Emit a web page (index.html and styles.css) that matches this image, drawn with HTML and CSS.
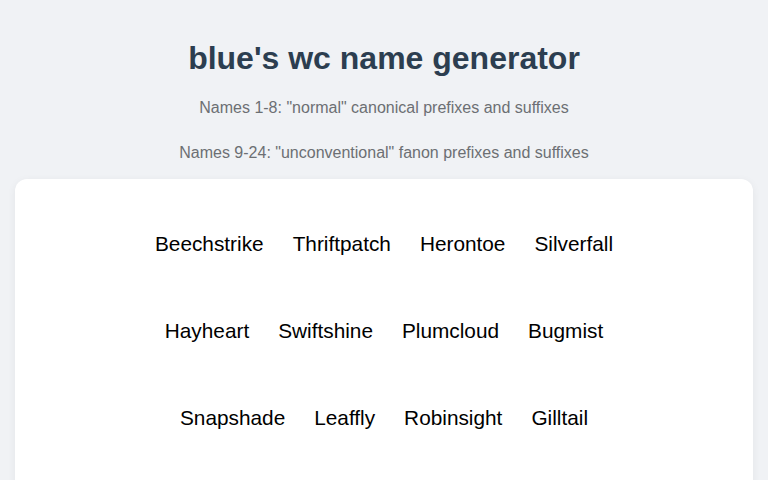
FILE: index.html
```html
<!DOCTYPE html>
<html lang="en">
<head>
    <meta charset="UTF-8">
    <meta name="viewport" content="width=device-width, initial-scale=1.0">
    <title>blue's wc name generator</title>
    <link rel="stylesheet" href="styles.css">
</head>
<body>

<h1>blue's wc name generator</h1>
<p class="note">Names 1-8: "normal" canonical prefixes and suffixes</p>
<p class="note">Names 9-24: "unconventional" fanon prefixes and suffixes</p>

<div class="card">
    <div class="row">
        <span class="name">Beechstrike</span>
        <span class="name">Thriftpatch</span>
        <span class="name">Herontoe</span>
        <span class="name">Silverfall</span>
    </div>
    <div class="row">
        <span class="name">Hayheart</span>
        <span class="name">Swiftshine</span>
        <span class="name">Plumcloud</span>
        <span class="name">Bugmist</span>
    </div>
    <div class="row">
        <span class="name">Snapshade</span>
        <span class="name">Leaffly</span>
        <span class="name">Robinsight</span>
        <span class="name">Gilltail</span>
    </div>
    <div class="row">
        <span class="name">Mothwhisker</span>
        <span class="name">Quailsong</span>
        <span class="name">Emberjaw</span>
        <span class="name">Tansypelt</span>
    </div>
    <div class="row">
        <span class="name">Frostbriar</span>
        <span class="name">Crowdapple</span>
        <span class="name">Lichenheart</span>
        <span class="name">Sorrelstep</span>
    </div>
    <div class="row">
        <span class="name">Duskmallow</span>
        <span class="name">Pebblegaze</span>
        <span class="name">Thistlewing</span>
        <span class="name">Wrenfrost</span>
    </div>
</div>

</body>
</html>
```

FILE: styles.css
```css
body {
    font-family: "Liberation Sans", Arial, sans-serif;
    background-color: #f0f2f5;
    margin: 0;
    padding: 0 15px 20px;
    text-align: center;
}

h1 {
    font-size: 32px;
    color: #2c3e50;
    margin: 40px 0 22px;
}

.note {
    font-size: 16px;
    color: #6c6f73;
    margin: 0;
}

.note + .note {
    margin-top: 27px;
}

.card {
    background: #ffffff;
    border-radius: 12px;
    box-shadow: 0 2px 8px rgba(0, 0, 0, 0.06);
    margin-top: 17px;
    padding: 53px 20px 52px;
    display: flex;
    flex-direction: column;
    gap: 63px;
}

.row {
    display: flex;
    justify-content: center;
    gap: 29px;
}

.name {
    font-size: 1.3rem;
    color: #000;
}
```
